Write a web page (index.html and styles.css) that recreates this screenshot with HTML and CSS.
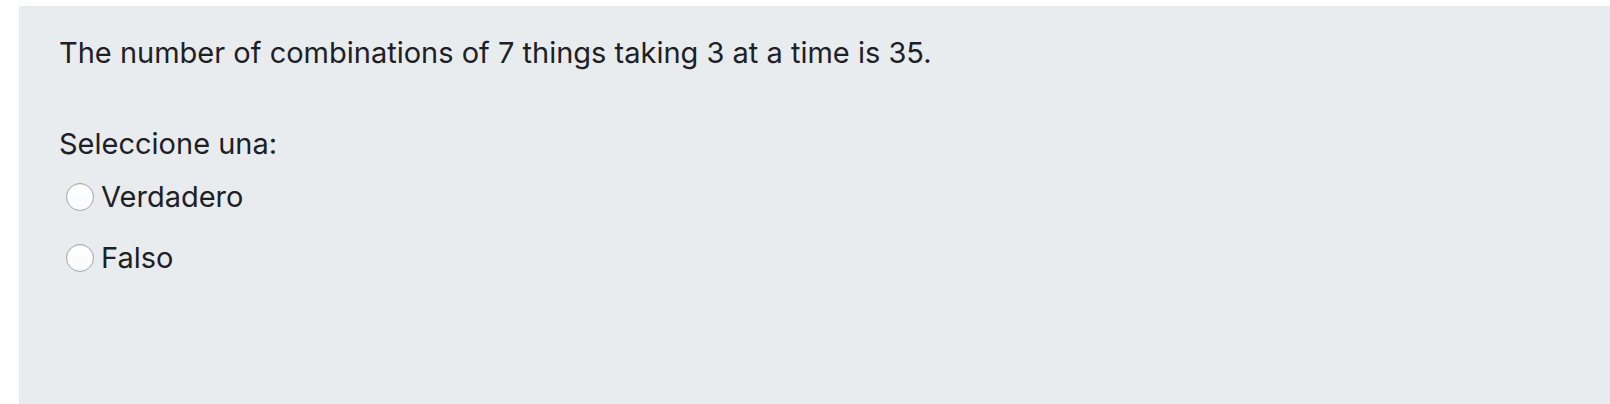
FILE: index.html
```html
<!DOCTYPE html>
<html lang="es">
<head>
<meta charset="utf-8">
<title>Pregunta</title>
<link rel="stylesheet" href="styles.css">
</head>
<body>
<div class="que">
  <div class="qtext">The number of combinations of 7 things taking 3 at a time is 35.</div>
  <div class="ablock">
    <div class="prompt">Seleccione una:</div>
    <div class="answer">
      <label class="option"><span class="radio"></span><span class="label">Verdadero</span></label>
      <label class="option"><span class="radio"></span><span class="label">Falso</span></label>
    </div>
  </div>
</div>
</body>
</html>
```

FILE: styles.css
```css
html, body {
  margin: 0;
  padding: 0;
  background: #ffffff;
}

body {
  font-family: Inter, "Liberation Sans", Arial, sans-serif;
  color: #1d2125;
  overflow: hidden;
}

.que {
  margin: 6px 0 0 19px;
  height: 398px;
  box-sizing: border-box;
  background: #e9ecef;
  padding: 29px 0 0 40px;
  font-size: 29px;
  line-height: 36px;
}

.qtext {
  margin-bottom: 55px;
}

.prompt {
  margin-bottom: 17px;
}

.answer {
  display: flex;
  flex-direction: column;
  gap: 25px;
}

.option {
  display: flex;
  align-items: center;
  gap: 7px;
  padding-left: 7px;
}

.radio {
  width: 26px;
  height: 26px;
  border-radius: 50%;
  border: 1px solid #a3a5a7;
  background: linear-gradient(#ffffff, #fafafa);
  box-shadow: inset 0 1px 1px rgba(0, 0, 0, 0.06);
  flex: none;
}
```
